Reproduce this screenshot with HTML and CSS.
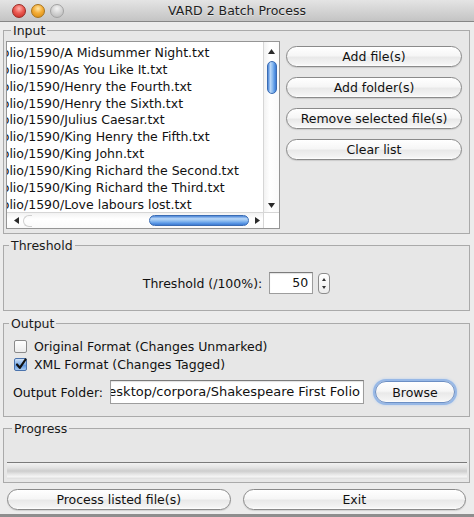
FILE: index.html
```html
<!DOCTYPE html>
<html lang="en">
<head>
    <meta charset="UTF-8">
    <meta name="viewport" content="width=device-width, initial-scale=1.0">
    <title>VARD 2 Batch Process</title>
    <link rel="stylesheet" href="styles.css">
</head>
<body>
    <div class="window">
        <div class="titlebar">
            <div class="lights">
                <span class="light close"></span>
                <span class="light minimize"></span>
                <span class="light zoom"></span>
            </div>
            <div class="title">VARD 2 Batch Process</div>
        </div>

        <div class="content">
            <!-- Input: file list and its buttons -->
            <fieldset class="group input-group">
                <legend>Input</legend>
                <div class="input-row">
                    <div class="file-list">
                        <div class="list-view">
                            <div class="list-items">
                                <div class="list-item">Folio/1590/A Midsummer Night.txt</div>
                                <div class="list-item">Folio/1590/As You Like It.txt</div>
                                <div class="list-item">Folio/1590/Henry the Fourth.txt</div>
                                <div class="list-item">Folio/1590/Henry the Sixth.txt</div>
                                <div class="list-item">Folio/1590/Julius Caesar.txt</div>
                                <div class="list-item">Folio/1590/King Henry the Fifth.txt</div>
                                <div class="list-item">Folio/1590/King John.txt</div>
                                <div class="list-item">Folio/1590/King Richard the Second.txt</div>
                                <div class="list-item">Folio/1590/King Richard the Third.txt</div>
                                <div class="list-item">Folio/1590/Love labours lost.txt</div>
                                <div class="list-item">Folio/1590/Macbeth.txt</div>
                            </div>
                        </div>
                        <div class="vscroll">
                            <svg class="arrow up" width="7" height="5" viewBox="0 0 7 5"><path d="M3.5 0 L7 5 L0 5 Z"/></svg>
                            <div class="thumb thumb-v"></div>
                            <svg class="arrow down" width="7" height="5" viewBox="0 0 7 5"><path d="M0 0 L7 0 L3.5 5 Z"/></svg>
                        </div>
                        <div class="hscroll">
                            <svg class="arrow left" width="5" height="7" viewBox="0 0 5 7"><path d="M0 3.5 L5 0 L5 7 Z"/></svg>
                            <div class="groove"></div>
                            <div class="thumb thumb-h"></div>
                            <svg class="arrow right" width="5" height="7" viewBox="0 0 5 7"><path d="M0 0 L5 3.5 L0 7 Z"/></svg>
                        </div>
                        <div class="corner"></div>
                    </div>

                    <div class="file-buttons">
                        <button class="aqua">Add file(s)</button>
                        <button class="aqua">Add folder(s)</button>
                        <button class="aqua">Remove selected file(s)</button>
                        <button class="aqua">Clear list</button>
                    </div>
                </div>
            </fieldset>

            <fieldset class="group threshold-group">
                <legend>Threshold</legend>
                <div class="threshold-row">
                    <span>Threshold (/100%):</span>
                    <div class="field number-field">50</div>
                    <div class="spinner">
                        <svg width="12" height="21" viewBox="0 0 12 21">
                            <path d="M6 5 L8 8 L4 8 Z" fill="#333"/>
                            <path d="M4 13 L8 13 L6 16 Z" fill="#333"/>
                        </svg>
                    </div>
                </div>
            </fieldset>

            <fieldset class="group output-group">
                <legend>Output</legend>
                <label class="check-row">
                    <span class="checkbox"></span>
                    Original Format (Changes Unmarked)
                </label>
                <label class="check-row">
                    <span class="checkbox checked">
                        <svg width="13" height="13" viewBox="0 0 13 13"><path d="M3 6.5 L5.8 9.8 L11.5 1.5" fill="none" stroke="#111" stroke-width="2.2" stroke-linecap="round" stroke-linejoin="round"/></svg>
                    </span>
                    XML Format (Changes Tagged)
                </label>
                <div class="folder-row">
                    <span class="folder-label">Output Folder:</span>
                    <div class="field path-field"><span>esktop/corpora/Shakespeare First Folio</span></div>
                    <button class="aqua focused">Browse</button>
                </div>
            </fieldset>

            <fieldset class="group progress-group">
                <legend>Progress</legend>
                <div class="progress-bar"></div>
            </fieldset>

            <div class="actions">
                <button class="aqua">Process listed file(s)</button>
                <button class="aqua">Exit</button>
            </div>
        </div>
    </div>
</body>
</html>
```

FILE: styles.css
```css
body {
    margin: 0;
    background-color: #8e8e8e;
    font-family: "DejaVu Sans", sans-serif;
    font-size: 12.5px;
    color: #111;
}

.window {
    width: 474px;
    height: 514px;
    background-color: #ececec;
    overflow: hidden;
}

/* Title bar */

.titlebar {
    display: grid;
    grid-template-columns: 1fr auto 1fr;
    align-items: center;
    height: 21px;
    background: linear-gradient(#e4e4e4, #c4c4c4);
    border-bottom: 1px solid #868686;
}

.lights {
    display: flex;
    gap: 5px;
    padding-left: 12px;
}

.light {
    width: 14px;
    height: 14px;
    border-radius: 50%;
    box-sizing: border-box;
}

.light.close {
    background: radial-gradient(circle at 50% 30%, #ffb4ae 0, #ec5a52 45%, #c0261f 100%);
    border: 1px solid #9a2a24;
}

.light.minimize {
    background: radial-gradient(circle at 50% 30%, #ffe7a8 0, #f4ad36 45%, #d3860e 100%);
    border: 1px solid #a8741c;
}

.light.zoom {
    background: radial-gradient(circle at 50% 30%, #f4f4f4 0, #d2d2d2 50%, #b4b4b4 100%);
    border: 1px solid #a2a2a2;
}

.title {
    color: #1e1e1e;
    text-shadow: 0 1px 0 rgba(255, 255, 255, 0.5);
}

/* Content */

.content {
    padding: 1px 4px 0 3px;
}

.group {
    margin: 0;
    padding: 0;
    min-width: 0;
    border: 1px solid #aaaaaa;
    background-color: #e7e7e7;
}

.group legend {
    margin-left: 5px;
    padding: 0 2px;
    line-height: 15px;
    color: #1a1a1a;
}

.input-group {
    padding: 3px 7px 4px 2px;
}

.threshold-group {
    margin-top: 4px;
    padding: 19px 0 16px;
}

.output-group {
    margin-top: 5px;
    padding: 6px 0 12px;
}

.progress-group {
    margin-top: 4px;
    padding: 26px 2px 3px 3px;
}

/* File list */

.input-row {
    display: flex;
    gap: 6px;
    align-items: flex-start;
}

.file-list {
    display: grid;
    grid-template-columns: 1fr 16px;
    grid-template-rows: 1fr 16px;
    width: 274px;
    height: 188px;
    box-sizing: border-box;
    border: 1px solid #959595;
    background-color: #fff;
}

.list-view {
    overflow: hidden;
    padding-top: 3px;
}

.list-items {
    margin-left: -12px;
    white-space: nowrap;
}

.list-item {
    line-height: 16.85px;
}

.vscroll {
    display: flex;
    flex-direction: column;
    align-items: center;
    border-left: 1px solid #d6d6d6;
    background: linear-gradient(to right, #f2f2f2, #ffffff 40%, #fafafa);
}

.hscroll {
    display: flex;
    align-items: center;
    border-top: 1px solid #d6d6d6;
    background: linear-gradient(#f2f2f2, #ffffff 40%, #fafafa);
}

.corner {
    background-color: #fff;
    border-left: 1px solid #d6d6d6;
    border-top: 1px solid #d6d6d6;
}

.arrow path {
    fill: #2a2a2a;
}

.arrow.up {
    margin-top: 7px;
}

.arrow.down {
    margin-top: auto;
    margin-bottom: 4px;
}

.arrow.left {
    margin-left: 7px;
}

.groove {
    width: 8px;
    height: 10px;
    margin-left: 4px;
    border: 1px solid #d0d0d0;
    border-right: none;
    border-radius: 6px 0 0 6px;
}

.thumb {
    box-sizing: border-box;
    border: 1px solid #3a6cb4;
    border-radius: 6px;
}

.thumb-v {
    width: 10px;
    height: 33px;
    margin-top: 7px;
    background: linear-gradient(to right, #4b86d8, #b9d7f8 30%, #8ebdf0 55%, #5a98e6 80%, #3f7ad0);
}

.thumb-h {
    width: 100px;
    height: 11px;
    margin-left: 117px;
    background: linear-gradient(#4b86d8, #b9d7f8 30%, #8ebdf0 55%, #5a98e6 80%, #3f7ad0);
}

.arrow.right {
    margin-left: 6px;
}

/* Buttons */

.file-buttons {
    display: flex;
    flex-direction: column;
    gap: 10px;
    width: 176px;
    padding-top: 5px;
}

.aqua {
    height: 21px;
    padding: 0;
    font-family: inherit;
    font-size: 12.5px;
    color: #111;
    border: 1px solid #8a8a8a;
    border-radius: 11px;
    background: linear-gradient(#ffffff, #f6f6f6 45%, #e9e9e9 55%, #f4f4f4 90%, #ffffff);
    box-shadow: 0 1px 1px rgba(0, 0, 0, 0.12);
}

.aqua.focused {
    width: 80px;
    height: 22px;
    border-color: #6c8fc4;
    box-shadow: 0 0 0 2px #97b8e6, 0 0 3px 2px #b9d0ef;
}

/* Fields */

.field {
    box-sizing: border-box;
    background-color: #fff;
    border: 1px solid #9d9d9d;
    border-top-color: #7c7c7c;
    box-shadow: inset 0 1px 1px rgba(0, 0, 0, 0.12);
}

.threshold-row {
    display: flex;
    justify-content: center;
    align-items: center;
    height: 22px;
}

.number-field {
    width: 44px;
    height: 22px;
    margin-left: 7px;
    padding-right: 4px;
    line-height: 20px;
    text-align: right;
}

.spinner {
    width: 12px;
    height: 21px;
    margin-left: 5px;
    box-sizing: border-box;
    border: 1px solid #8c8c8c;
    border-radius: 4px;
    background: linear-gradient(#ffffff, #ececec);
}

.spinner svg {
    display: block;
    margin: -1px;
}

/* Output */

.check-row {
    display: flex;
    align-items: center;
    gap: 7px;
    height: 18px;
    padding-left: 10px;
}

.checkbox {
    width: 13px;
    height: 13px;
    box-sizing: border-box;
    border: 1px solid #8a8a8a;
    border-radius: 2px;
    background: linear-gradient(#ffffff, #ececec);
}

.checkbox.checked {
    border-color: #4a73ad;
    background: linear-gradient(#cfe2f8, #7eaee8 50%, #5c95df 55%, #a8cbf3);
}

.checkbox svg {
    display: block;
    margin: -1px;
}

.folder-row {
    display: flex;
    align-items: center;
    height: 24px;
    margin-top: 7px;
    padding-left: 9px;
}

.folder-label {
    width: 97px;
}

.path-field {
    display: flex;
    justify-content: flex-end;
    width: 254px;
    height: 24px;
    padding-right: 3px;
    overflow: hidden;
    white-space: nowrap;
    font-size: 13px;
    line-height: 22px;
    margin-right: 11px;
}

/* Progress */

.progress-bar {
    height: 17px;
    box-sizing: border-box;
    border-top: 1px solid #7a7a7a;
    background: linear-gradient(#f2f2f2, #e2e2e2 30%, #cdcdcd 50%, #e6e6e6 70%, #f4f4f4 85%, #dcdcdc);
}

/* Bottom buttons */

.actions {
    display: grid;
    grid-template-columns: 1fr 1fr;
    gap: 12px;
    margin: 6px 4px 0 4px;
}
```
